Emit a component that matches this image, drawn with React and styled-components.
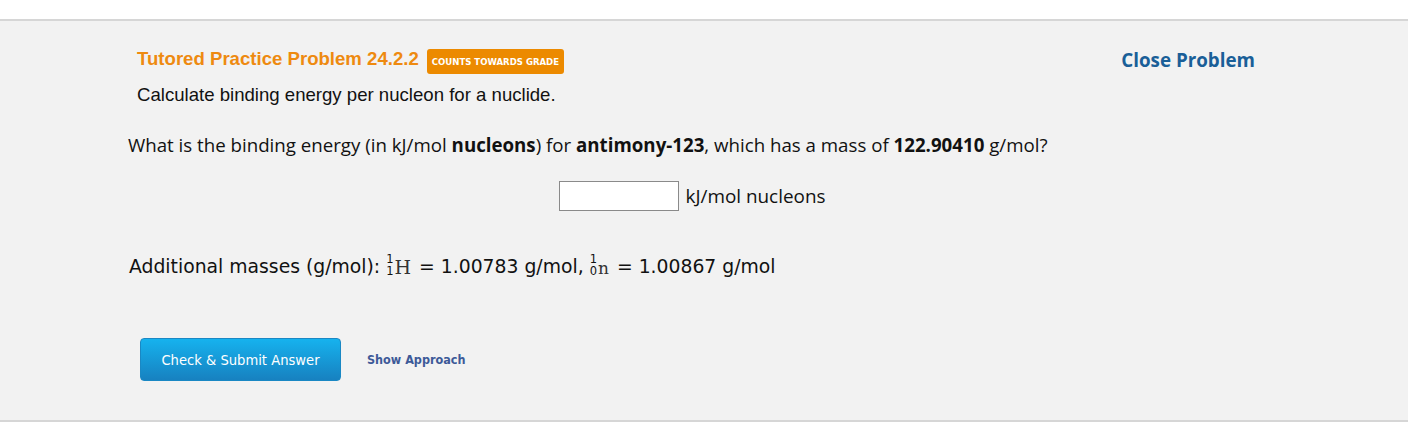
import React from "react";
import styled, { createGlobalStyle } from "styled-components";

const Global = createGlobalStyle`
  html, body { margin: 0; padding: 0; background: #fff; }
  body { font-family: "Open Sans", sans-serif; }
`;

const Panel = styled.section`
  margin-top: 19px;
  height: 399px;
  box-sizing: content-box;
  background: #f2f2f2;
  border-top: 2px solid #d6d6d6;
  border-bottom: 2px solid #d6d6d6;
`;

const Content = styled.div`
  padding: 26px 0 0 128px;
  width: 1127px;
  box-sizing: content-box;
`;

const HeaderRow = styled.div`
  display: flex;
  justify-content: space-between;
  align-items: flex-start;
  padding-left: 9px;
`;

const TitleLine = styled.div`
  display: flex;
  align-items: center;
  gap: 8px;
  height: 24px;
`;

const Title = styled.h2`
  margin: 0;
  font-family: "Liberation Sans", Arial, sans-serif;
  font-weight: bold;
  font-size: 18.6px;
  color: #ee8a10;
`;

const Badge = styled.span`
  display: inline-flex;
  align-items: center;
  height: 25px;
  padding: 0 5px;
  margin-top: 5px;
  border-radius: 3px;
  background: #ec8a00;
  color: #fff;
  font-family: "DejaVu Sans Condensed", "DejaVu Sans", sans-serif;
  font-weight: bold;
  font-size: 9.5px;
`;

const Subtitle = styled.p`
  margin: 13px 0 0 0;
  font-family: "Liberation Sans", Arial, sans-serif;
  font-size: 18.6px;
  line-height: 22px;
  color: #111;
`;

const CloseLink = styled.a`
  font-family: "Open Sans", sans-serif;
  font-weight: bold;
  font-size: 18.8px;
  color: #1a5f98;
  text-decoration: none;
`;

const Question = styled.p`
  margin: 26px 0 0 0;
  font-family: "Open Sans", sans-serif;
  font-size: 18.7px;
  line-height: 26px;
  color: #111;
  b { font-weight: bold; }
`;

const AnswerRow = styled.div`
  display: flex;
  justify-content: center;
  align-items: center;
  gap: 6px;
  margin-top: 23px;
  padding-left: 2px;
`;

const AnswerInput = styled.input`
  width: 120px;
  height: 30px;
  box-sizing: border-box;
  border: 1px solid #8a8a8a;
  background: #fff;
  padding: 0 4px;
  font-size: 16px;
`;

const Unit = styled.span`
  font-family: "Open Sans", sans-serif;
  font-size: 18.9px;
  color: #111;
`;

const Masses = styled.p`
  margin: 41px 0 0 1px;
  font-family: "DejaVu Sans", Verdana, sans-serif;
  font-size: 18.8px;
  line-height: 30px;
  color: #111;
  display: flex;
  align-items: center;
`;

const Nuclide = styled.span`
  display: inline-flex;
  align-items: center;
  margin: 0 8px 0 6px;
`;

const Scripts = styled.span`
  display: inline-flex;
  flex-direction: column;
  align-items: flex-end;
  font-family: "DejaVu Sans", sans-serif;
  font-size: 11.5px;
  line-height: 12px;
  margin-right: 1px;
  position: relative;
  top: -2px;
`;

const Symbol = styled.span`
  font-family: "DejaVu Serif", "Liberation Serif", serif;
  font-size: ${(p) => p.$size || 19}px;
  color: #333;
  position: relative;
  top: ${(p) => p.$top || 0}px;
`;

const Actions = styled.div`
  display: flex;
  align-items: center;
  gap: 26px;
  margin: 56px 0 0 12px;
`;

const SubmitButton = styled.button`
  width: 201px;
  height: 43px;
  border: 1px solid #1a88c4;
  border-radius: 4px;
  background: linear-gradient(to bottom, #16b2ee, #1781c0);
  color: #fff;
  font-family: "DejaVu Sans Condensed", "DejaVu Sans", sans-serif;
  font-size: 14.6px;
  cursor: pointer;
`;

const ApproachLink = styled.a`
  font-family: "DejaVu Sans Condensed", "DejaVu Sans", sans-serif;
  font-weight: bold;
  font-size: 12.5px;
  color: #3d5a98;
  text-decoration: none;
`;

export default function App() {
  return (
    <>
      <Global />
      <Panel>
        <Content>
          <HeaderRow>
            <div>
              <TitleLine>
                <Title>Tutored Practice Problem 24.2.2</Title>
                <Badge>COUNTS TOWARDS GRADE</Badge>
              </TitleLine>
              <Subtitle>Calculate binding energy per nucleon for a nuclide.</Subtitle>
            </div>
            <CloseLink href="#">Close Problem</CloseLink>
          </HeaderRow>
          <Question>
            What is the binding energy (in kJ/mol <b>nucleons</b>) for <b>antimony-123</b>, which has a mass of <b>122.90410</b> g/mol?
          </Question>
          <AnswerRow>
            <AnswerInput type="text" />
            <Unit>kJ/mol nucleons</Unit>
          </AnswerRow>
          <Masses>
            Additional masses (g/mol):
            <Nuclide>
              <Scripts>
                <span>1</span>
                <span>1</span>
              </Scripts>
              <Symbol>H</Symbol>
            </Nuclide>
            = 1.00783 g/mol,
            <Nuclide>
              <Scripts>
                <span>1</span>
                <span>0</span>
              </Scripts>
              <Symbol $size={17} $top={1}>n</Symbol>
            </Nuclide>
            = 1.00867 g/mol
          </Masses>
          <Actions>
            <SubmitButton>Check &amp; Submit Answer</SubmitButton>
            <ApproachLink href="#">Show Approach</ApproachLink>
          </Actions>
        </Content>
      </Panel>
    </>
  );
}
